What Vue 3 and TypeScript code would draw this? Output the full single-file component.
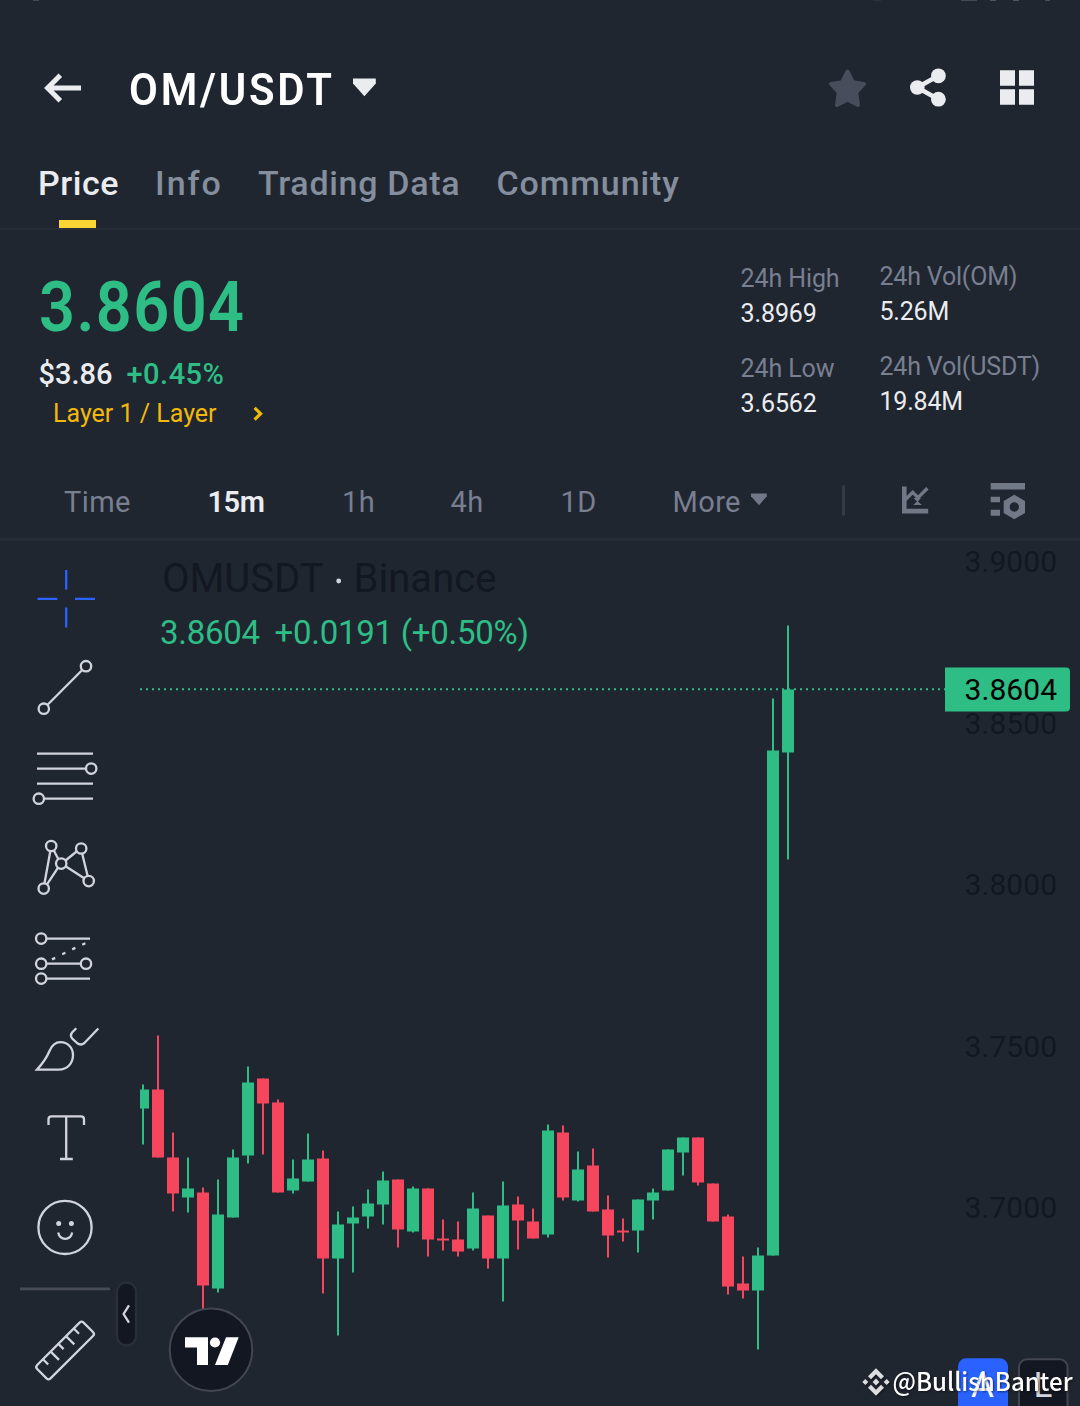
<script setup lang="ts">
interface Candle {
  up: boolean
  high: number
  low: number
  top: number
  bottom: number
}

const raw: [number, number, number, number, number][] = [
  [1, 1084, 1145, 1089, 1109], [0, 1035, 1158, 1089, 1158], [0, 1132, 1212, 1157, 1194],
  [1, 1157, 1213, 1188, 1198], [0, 1187, 1312, 1192, 1286], [1, 1179, 1293, 1214, 1289],
  [1, 1149, 1218, 1157, 1218], [1, 1066, 1164, 1082, 1156], [0, 1078, 1155, 1078, 1104],
  [0, 1099, 1193, 1102, 1193], [1, 1159, 1194, 1178, 1191], [1, 1133, 1182, 1159, 1182],
  [0, 1150, 1294, 1158, 1259], [1, 1211, 1336, 1224, 1259], [1, 1206, 1273, 1217, 1224],
  [1, 1189, 1229, 1203, 1217], [1, 1171, 1225, 1180, 1205], [0, 1179, 1248, 1179, 1230],
  [1, 1186, 1233, 1188, 1232], [0, 1188, 1257, 1188, 1240], [0, 1219, 1251, 1238, 1241],
  [0, 1221, 1257, 1239, 1252], [1, 1192, 1251, 1208, 1249], [0, 1215, 1269, 1215, 1259],
  [1, 1181, 1302, 1205, 1259], [0, 1196, 1250, 1204, 1221], [0, 1208, 1239, 1221, 1239],
  [1, 1124, 1238, 1130, 1235], [0, 1125, 1201, 1132, 1198], [1, 1151, 1202, 1169, 1201],
  [0, 1148, 1212, 1165, 1212], [0, 1195, 1258, 1209, 1236], [0, 1218, 1242, 1230, 1233],
  [1, 1199, 1253, 1199, 1231], [1, 1188, 1220, 1192, 1201], [1, 1149, 1191, 1149, 1191],
  [1, 1137, 1176, 1137, 1153], [0, 1137, 1186, 1137, 1183], [0, 1183, 1222, 1183, 1222],
  [0, 1214, 1295, 1216, 1287], [0, 1256, 1299, 1283, 1291], [1, 1247, 1350, 1255, 1291],
  [1, 698, 1256, 750, 1256], [1, 625, 860, 689, 753],
]
const candles: Candle[] = raw.map(([up, high, low, top, bottom]) => ({
  up: up === 1,
  high: high + 0.5,
  low: low - 0.5,
  top: top + 0.5,
  bottom: bottom - 0.5,
}))
const bodyX = (i: number) => (i === 0 ? 140 : 137 + 15 * i)
const bodyW = (i: number) => (i === 0 ? 9 : 12)

const scale = [
  { label: '3.9000', y: 572.3 },
  { label: '3.8500', y: 734.3 },
  { label: '3.8000', y: 895.3 },
  { label: '3.7500', y: 1057.3 },
  { label: '3.7000', y: 1218.3 },
]

interface Tool {
  name: string
  path: string
  rings?: [number, number, number][]
  dots?: [number, number, number][]
}
const tools: Tool[] = [
  { name: 'cross', path: 'M66.2 570V589.5M66.2 607.5V627.5M37.5 598.8H57.3M75 598.8H95' },
  { name: 'line', path: 'M47.6 704.8L82.2 670', rings: [[43.8, 708.7, 5.2], [86, 666.2, 5.2]] },
  {
    name: 'fib',
    path: 'M37 753.6H93M37 768.6H86M37 783.6H93M44 798.7H93',
    rings: [[91.2, 768.6, 5.2], [38.8, 798.7, 5.2]],
  },
  {
    name: 'pattern',
    path: 'M50.3 851.3L44.5 883.2M53.8 850.5L58.3 859M65.5 860.5L76.6 851.5M65.6 866.3L84.2 878.2M82.2 853.7L87.6 875.8M57.9 867.9L47 884.4',
    rings: [[51.2, 846, 5.2], [81.2, 848.5, 5.2], [61.2, 863.6, 5.2], [88.7, 881.1, 5.2], [43.7, 888.6, 5.2]],
  },
  {
    name: 'forecast',
    path: 'M46.5 938.6H90M46.5 963.7H80.7M46.5 978.6H90M52 959.4L55.2 957.9M62.2 954.2L65.4 952.7M72.2 949.4L75.4 947.9M82.2 944.8L85.4 943.3',
    rings: [[41.2, 938.6, 5.2], [41.2, 963.7, 5.2], [86, 963.7, 5.2], [41.2, 978.6, 5.2]],
  },
  {
    name: 'brush',
    path: 'M37 1069.6C44 1062 47 1057 49.5 1051C52 1045 56 1042.2 60.5 1042.2C67.5 1042.2 73 1047.5 73 1055C73 1063.5 67 1069.6 59 1069.6ZM76.3 1028.3L72.3 1032.3Q69.6 1035.6 72.3 1038.6L77 1043Q80.8 1046 84.4 1043L98.3 1028.5',
  },
  { name: 'text', path: 'M48.5 1125V1119.3Q48.5 1116.4 51.5 1116.4H81Q84 1116.4 84 1119.3V1125M66.2 1116.4V1159M60 1159H72.8' },
  {
    name: 'emoji',
    path: 'M58.2 1232.5C60 1241 70.4 1241 72.2 1232.5',
    rings: [[65, 1227.4, 26.6]],
    dots: [[58.7, 1223.6, 2.5], [71.4, 1223.6, 2.5]],
  },
]
const statusMarks: [number, number, number][] = [
  [33, 6, 0.6], [873, 8, 0.2], [961, 16, 0.6], [990, 6, 0.8], [1013, 6, 0.8], [1045, 5, 0.7],
]
</script>

<template>
  <main class="screen">
    <svg class="status" width="1080" height="1" viewBox="0 0 1080 1">
      <rect v-for="m in statusMarks" :key="m[0]" :x="m[0]" y="0" :width="m[1]" height="1" fill="#5d636e" :opacity="m[2]" />
    </svg>
    <header class="header">
      <svg class="back" width="40" height="34" viewBox="43 71 40 34">
        <path d="M81 88H48M60.3 75.2L47.6 88L60.3 100.8" fill="none" stroke="#eaecef" stroke-width="5" />
      </svg>
      <h1 class="pair">OM/USDT</h1>
      <svg class="caret" width="24" height="20" viewBox="352 78 24 20">
        <path d="M353 78.4H375.8V83.6L364.4 96.2L353 83.6Z" fill="#eaecef" />
      </svg>
      <svg class="star" width="40" height="40" viewBox="828 68 40 40">
        <path d="M847.5 71.5L853 82.3L864 84L856.2 92.3L858 105L847.5 99.7L837 105L838.8 92.3L831 84L842 82.3Z" fill="#474d5a" stroke="#474d5a" stroke-width="4" stroke-linejoin="round" />
      </svg>
      <svg class="share" width="38" height="40" viewBox="909 68 38 40">
        <path d="M938.3 75.8L917.3 87.5L938.3 99.2" fill="none" stroke="#eaecef" stroke-width="4.6" />
        <g fill="#eaecef">
          <circle cx="938.4" cy="75.8" r="7.4" /><circle cx="917.3" cy="87.5" r="7.3" /><circle cx="938.4" cy="99.2" r="7.4" />
        </g>
      </svg>
      <svg class="grid" width="36" height="36" viewBox="999 70 36 36">
        <path d="M1000 70.3h15v15.5h-15zM1019 70.3h15v15.5h-15zM1000 89.2h15v15.5h-15zM1019 89.2h15v15.5h-15z" fill="#eaecef" />
      </svg>
    </header>

    <nav class="tabs">
      <span class="tab price active">Price</span>
      <span class="tab info">Info</span>
      <span class="tab trading">Trading Data</span>
      <span class="tab community">Community</span>
    </nav>

    <section class="summary">
      <div class="quote">
        <div class="last">3.8604</div>
        <div class="fiat"><span>$3.86</span><span class="gain">+0.45%</span></div>
        <div class="category">
          <span>Layer 1 / Layer</span>
          <svg width="12" height="18" viewBox="252 404 12 18">
            <path d="M254.6 406.8L260.6 412.7L254.6 418.6" fill="none" stroke="#f0b90b" stroke-width="3.2" />
          </svg>
        </div>
      </div>
      <dl class="stats range">
        <dt>24h High</dt><dd>3.8969</dd>
        <dt>24h Low</dt><dd>3.6562</dd>
      </dl>
      <dl class="stats volume">
        <dt>24h Vol(OM)</dt><dd>5.26M</dd>
        <dt>24h Vol(USDT)</dt><dd>19.84M</dd>
      </dl>
    </section>

    <section class="intervals">
      <span class="i-time">Time</span>
      <span class="i-15 on">15m</span>
      <span class="i-1h">1h</span>
      <span class="i-4h">4h</span>
      <span class="i-1d">1D</span>
      <span class="i-more">More</span>
      <svg class="tools" width="290" height="40" viewBox="750 480 290 40" fill="#717987">
        <path d="M751 493.4H766.8V496.2L759 505.2L751 496.2Z" />
        <rect x="842" y="485.5" width="3" height="30" fill="#343a45" />
        <path d="M902 486.6H906.6V508.7H928.2V513.4H902Z" />
        <path d="M905 500L912.7 492.3L918 497.7L927.4 488.3" fill="none" stroke="#717987" stroke-width="3.4" />
        <path d="M913.6 498H921L917.8 501.6L922 505H913.2L917 501.6Z" />
        <path d="M990.7 483.1H1025V489.4H990.7ZM990.7 496.7H1000V502.3H990.7ZM990.7 509.8H1000V515.7H990.7Z" />
        <path fill-rule="evenodd" d="M1014.3 494.7L1025 501V513L1014.3 519.3L1003.7 513V501ZM1014.3 502.3A4.7 4.7 0 1 0 1014.3 511.7A4.7 4.7 0 1 0 1014.3 502.3Z" />
      </svg>
    </section>

    <section class="chart">
      <aside class="drawing">
        <svg v-for="(t, i) in tools" :key="t.name" :class="['tool', t.name]" width="140" height="90" :viewBox="`0 ${554 + 90 * i} 140 90`">
          <path :d="t.path" />
          <circle v-for="(r, k) in t.rings" :key="k" :cx="r[0]" :cy="r[1]" :r="r[2]" />
          <circle v-for="(d, k) in t.dots" :key="'d' + k" class="dot" :cx="d[0]" :cy="d[1]" :r="d[2]" />
        </svg>
        <svg class="tool" width="140" height="132" viewBox="0 1274 140 132">
          <rect x="20" y="1287.5" width="90" height="2.8" fill="#474b56" stroke="none" />
          <path d="M79.6 1322.6Q81.6 1320.6 83.6 1322.6L93 1332Q95 1334 93 1336L50.5 1378.4Q48.5 1380.4 46.5 1378.4L37.2 1369Q35.2 1367 37.2 1365Z" />
          <path d="M43 1359.3L48.2 1364.5M50.7 1351.6L59 1359.9M58.4 1343.9L63.6 1349.1M66.1 1336.2L74.3 1344.4M73.8 1328.5L79 1333.7" />
          <rect x="117" y="1282.5" width="19" height="63" rx="9.5" fill="#131722" stroke="#292e39" />
          <path d="M129 1305.3L123.6 1314L129 1322.6" />
        </svg>
      </aside>
      <svg class="plot" width="940" height="865" viewBox="140 541 940 865">
        <text class="symbol" x="162" y="592.4" textLength="161.5">OMUSDT</text>
        <circle cx="338.7" cy="581" r="2.4" fill="#d1d4dc" />
        <text class="symbol" x="353.5" y="592.4" textLength="143">Binance</text>
        <text class="change" x="160" y="644.3" textLength="100">3.8604</text>
        <text class="change" x="274.5" y="644.3" textLength="254.5">+0.0191 (+0.50%)</text>

        <text v-for="s in scale" :key="s.label" class="level" x="964.5" :y="s.y" textLength="92.5">{{ s.label }}</text>

        <g v-for="(c, i) in candles" :key="i" :fill="c.up ? '#2ebd85' : '#f6465d'">
          <rect :x="142 + 15 * i" :y="c.high" width="2" :height="c.low - c.high" />
          <rect :x="bodyX(i)" :y="c.top" :width="bodyW(i)" :height="c.bottom - c.top" />
        </g>
        <path d="M140 689.3H945" stroke="#2ebd85" stroke-width="2" stroke-dasharray="2 4" />
        <path d="M945 667.4H1066Q1070 667.4 1070 671.4V707.6Q1070 711.6 1066 711.6H945Z" fill="#2ebd85" />
        <text class="current" x="964.5" y="700.4" textLength="92.5">3.8604</text>

        <circle cx="211" cy="1349.7" r="41.3" fill="#131722" stroke="#434651" stroke-width="2" />
        <g fill="#fff">
          <path d="M185 1337.3H208V1365.1H197V1347.5H185Z" />
          <circle cx="215" cy="1342.5" r="5.1" />
          <path d="M226 1337.3H238.7L227.8 1365.1H215Z" />
        </g>

        <rect x="958" y="1358.3" width="50" height="60" rx="8" fill="#2962ff" />
        <text class="mode" x="982.5" y="1397.3" text-anchor="middle" fill="#fff">A</text>
        <rect x="1019" y="1359.3" width="48.5" height="60" rx="8" fill="#131722" stroke="#434651" stroke-width="2" />
        <text class="mode" x="1043" y="1397.3" text-anchor="middle" fill="#d1d4dc">L</text>

        <g class="mark">
          <path d="M876 1368.3L884 1376.3L881 1379.3L876 1374.3L871 1379.3L868 1376.3ZM876 1395.7L884 1387.7L881 1384.7L876 1389.7L871 1384.7L868 1387.7ZM876 1378.6L879.4 1382L876 1385.4L872.6 1382ZM865.3 1379L868.3 1382L865.3 1385L862.3 1382ZM886.7 1379L889.7 1382L886.7 1385L883.7 1382Z" fill="#dcdddf" />
          <text class="handle" x="892.5" y="1391.3" textLength="180" lengthAdjust="spacingAndGlyphs">@BullishBanter</text>
        </g>
      </svg>
    </section>
  </main>
</template>

<style>
body {
  margin: 0;
  background: #202630;
}
</style>

<style scoped>
.screen {
  width: 1080px;
  height: 1406px;
  overflow: hidden;
  background: #202630;
  color: #eaecef;
  font-family: Roboto, 'Liberation Sans', sans-serif;
}
svg {
  display: block;
  flex: none;
}
.header {
  display: flex;
  align-items: center;
  box-sizing: border-box;
  height: 137px;
  padding: 37px 45px 0 43px;
}
.pair {
  margin: 3px 0 0 45.5px;
  width: 223.5px;
  font-size: 45px;
  font-weight: 600;
  letter-spacing: 3px;
  line-height: 60px;
  white-space: nowrap;
  color: #fff;
  transform: scaleX(0.93);
  transform-origin: left;
}
.caret {
  margin-right: 452px;
}
.star {
  margin-right: 41px;
}
.share {
  margin-right: 52px;
}
.tabs {
  display: flex;
  height: 90px;
  padding-left: 38px;
  border-bottom: 2px solid #282e37;
  font-size: 34px;
  font-weight: 500;
  letter-spacing: 0.5px;
  line-height: 90px;
  color: #848e9c;
  white-space: nowrap;
}
.tab.price {
  position: relative;
  width: 117px;
  color: #eaecef;
}
.tab.price::after {
  content: '';
  position: absolute;
  left: 21px;
  bottom: 0;
  width: 37px;
  height: 8px;
  background: #fcd535;
}
.tab.info {
  width: 103px;
  letter-spacing: 2px;
}
.tab.trading {
  width: 238.5px;
  letter-spacing: 0.7px;
}
.tab.community {
  letter-spacing: 0.9px;
}
.summary {
  display: flex;
  height: 231px;
}
.quote {
  width: 702.5px;
  padding: 27px 0 0 38.5px;
  box-sizing: border-box;
  margin-right: 38px;
}
.last {
  font-size: 70px;
  font-weight: 600;
  letter-spacing: 1.6px;
  line-height: 100px;
  color: #2ebd85;
  transform: scaleX(0.9);
  transform-origin: left;
}
.fiat {
  display: flex;
  gap: 14px;
  font-size: 29px;
  font-weight: 500;
  line-height: 34px;
}
.gain {
  color: #2ebd85;
  letter-spacing: 0.5px;
}
.category {
  display: flex;
  align-items: center;
  gap: 35.5px;
  padding-left: 14.5px;
  font-size: 25px;
  line-height: 44px;
  color: #f0b90b;
}
.category span {
  padding-top: 1px;
}
.stats {
  margin: 0;
  font-size: 25px;
  white-space: nowrap;
}
.stats dt {
  line-height: 34px;
  color: #787f90;
}
.stats dd {
  margin: 0 0 20px;
  line-height: 36px;
}
.range {
  width: 139px;
  padding-top: 32px;
  letter-spacing: -0.1px;
}
.volume {
  padding-top: 30px;
  letter-spacing: -0.2px;
}
.intervals {
  display: flex;
  align-items: center;
  box-sizing: border-box;
  height: 80px;
  padding-left: 64px;
  border-bottom: 3px solid #272d37;
  font-size: 29px;
  letter-spacing: 0.4px;
  line-height: 76px;
  color: #787f90;
}
.intervals span {
  padding-top: 5px;
}
.intervals .on {
  color: #eaecef;
  font-weight: 600;
  letter-spacing: -0.5px;
}
.i-time { width: 143.5px; }
.i-15 { width: 134.5px; }
.i-1h { width: 108.5px; }
.i-4h { width: 110px; }
.i-1d { width: 112px; }
.i-more { width: 77.5px; }
.chart {
  display: flex;
  height: 866px;
}
.drawing {
  width: 140px;
  padding-top: 13px;
}
.tool {
  fill: none;
  stroke: #d1d4dc;
  stroke-width: 2.3;
}
.cross {
  stroke: #2962ff;
}
.dot {
  fill: #d1d4dc;
  stroke: none;
}
.symbol {
  font-size: 40px;
  fill: #131722;
}
.change {
  font-size: 33px;
  fill: #2ebd85;
}
.level {
  font-size: 30px;
  fill: #131722;
}
.current {
  font-size: 30px;
  fill: #000;
}
.mode {
  font-size: 35px;
}
.mark {
  filter: drop-shadow(1px 1px 1px rgba(0, 0, 0, 0.55));
}
.handle {
  font-family: 'Noto Sans CJK SC', 'Noto Sans', sans-serif;
  font-size: 25px;
  font-weight: 500;
  fill: #fff;
}
</style>
